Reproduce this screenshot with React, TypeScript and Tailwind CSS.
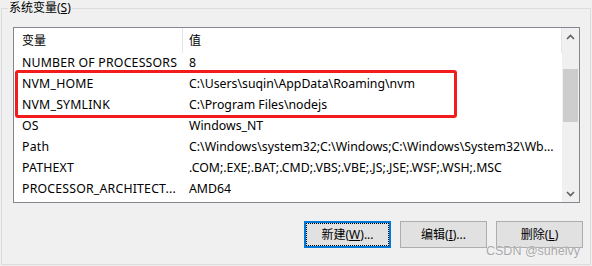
import React from 'react';

const font = '"Noto Sans", "Noto Sans CJK SC", sans-serif';

const rows: [string, string][] = [
    ['NUMBER OF PROCESSORS', '8'],
    ['NVM_HOME', 'C:\\Users\\suqin\\AppData\\Roaming\\nvm'],
    ['NVM_SYMLINK', 'C:\\Program Files\\nodejs'],
    ['OS', 'Windows_NT'],
    ['Path', 'C:\\Windows\\system32;C:\\Windows;C:\\Windows\\System32\\Wb...'],
    ['PATHEXT', '.COM;.EXE;.BAT;.CMD;.VBS;.VBE;.JS;.JSE;.WSF;.WSH;.MSC'],
    ['PROCESSOR_ARCHITECT...', 'AMD64'],
];

const Chevron: React.FC<{ up?: boolean }> = ({ up }) => (
    <svg width="9" height="6" viewBox="0 0 9 6">
        <polyline
            points={up ? '1,5 4.5,1.5 8,5' : '1,1 4.5,4.5 8,1'}
            fill="none"
            stroke="#606060"
            strokeWidth="1.6"
        />
    </svg>
);

const WinButton: React.FC<{ label: string; hotkey: string; tail?: string; focused?: boolean }> = ({ label, hotkey, tail = '', focused }) => (
    <button
        className={
            focused
                ? 'w-[87px] h-[27px] bg-[#e1e1e1] border-2 border-[#0078d7] p-0 text-[12px] text-black'
                : 'w-[87px] h-[27px] bg-[#e1e1e1] border border-[#adadad] p-0 text-[12px] text-black'
        }
    >
        {focused ? (
            <div className="w-full h-full border border-dotted border-black flex items-center justify-center">
                {label}(<u>{hotkey}</u>){tail}
            </div>
        ) : (
            <span>
                {label}(<u>{hotkey}</u>){tail}
            </span>
        )}
    </button>
);

export default function App() {
    return (
        <div className="relative w-[592px] h-[266px] bg-[#f0f0f0] overflow-hidden text-black" style={{ fontFamily: font }}>
            <fieldset className="ml-px w-[590px] h-[265px] border border-[#dcdcdc]">
                <legend className="ml-[6px] px-[1px] text-[12px] leading-4">
                    系统变量(<u>S</u>)
                </legend>

                <div className="ml-[11px] mt-[11px] w-[567px] h-[176px] border border-[#828790] bg-white flex text-[12.3px]">
                    <div className="flex-1 flex flex-col">
                        <div className="h-[25px] flex items-center text-[12px]">
                            <div className="w-[169px] h-full pl-[8px] flex items-center border-r border-[#e5e5e5]">变量</div>
                            <div className="flex-1 h-full pl-[6px] flex items-center border-r border-[#e5e5e5]">值</div>
                        </div>
                        {rows.map(([name, value]) => (
                            <div key={name} className="h-[21px] flex items-center whitespace-nowrap">
                                <div className="w-[169px] pl-[8px] tracking-[0.2px]">{name}</div>
                                <div className="pl-[6px]">{value}</div>
                            </div>
                        ))}
                    </div>
                    <div className="w-[17px] bg-[#f0f0f0] flex flex-col">
                        <div className="h-[17px] flex items-center justify-center">
                            <Chevron up />
                        </div>
                        <div className="flex-1">
                            <div className="mt-[24px] mx-px h-[53px] bg-[#cdcdcd]" />
                        </div>
                        <div className="h-[17px] flex items-center justify-center">
                            <Chevron />
                        </div>
                    </div>
                </div>

                <div className="ml-[302px] mt-[18px] flex gap-[9px]">
                    <WinButton label="新建" hotkey="W" tail="..." focused />
                    <WinButton label="编辑" hotkey="I" tail="..." />
                    <WinButton label="删除" hotkey="L" />
                </div>
            </fieldset>

            {/* highlight box drawn over the two NVM rows */}
            <div className="absolute left-[15px] top-[70px] w-[442px] h-[48px] border-[3px] border-[#f21c1c] rounded-[3px]" />

            <div
                className="absolute left-[486px] top-[242px] text-[12.5px] text-[#a8a8a8]"
                style={{ fontFamily: '"Liberation Sans", sans-serif', textShadow: '0 0 1px #fff' }}
            >
                CSDN @suheivy
            </div>
        </div>
    );
}
